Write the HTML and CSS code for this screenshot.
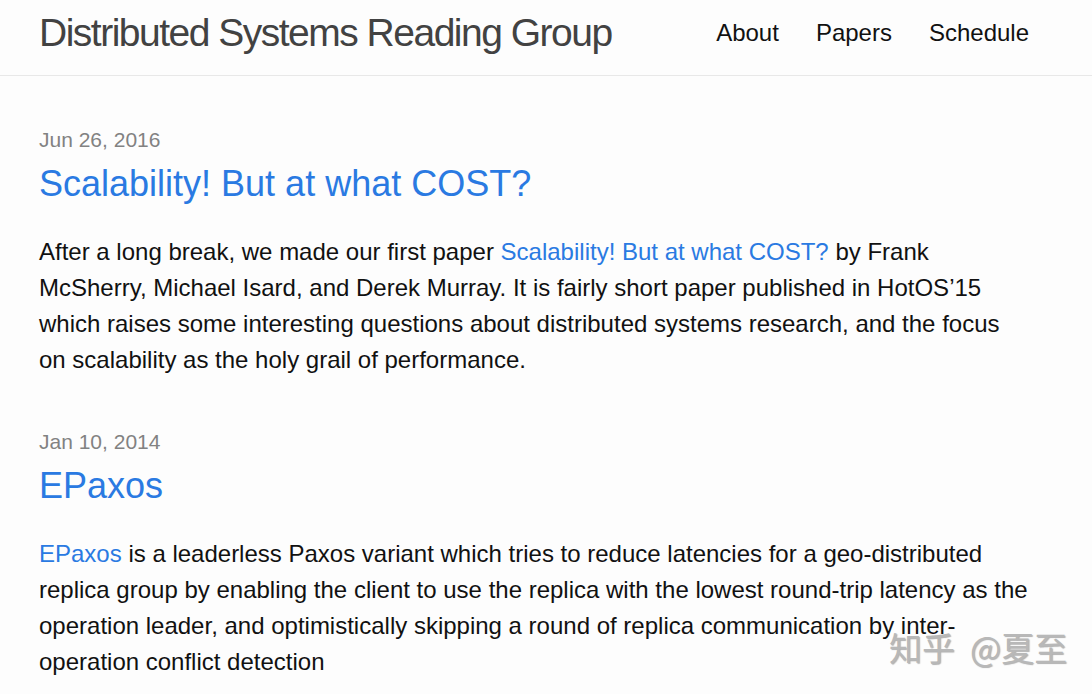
FILE: index.html
```html
<!DOCTYPE html>
<html lang="en">
<head>
<meta charset="utf-8">
<title>Distributed Systems Reading Group</title>
<link rel="stylesheet" href="styles.css">
</head>
<body>
<header class="site-header">
  <div class="wrapper header-inner">
    <a class="site-title" href="#">Distributed Systems Reading Group</a>
    <nav class="site-nav">
      <a class="page-link" href="#">About</a>
      <a class="page-link" href="#">Papers</a>
      <a class="page-link" href="#">Schedule</a>
    </nav>
  </div>
</header>
<main class="page-content">
  <div class="wrapper">
    <ul class="post-list">
      <li class="post">
        <span class="post-meta">Jun 26, 2016</span>
        <h2 class="post-title"><a class="post-link" href="#">Scalability! But at what COST?</a></h2>
        <p class="post-excerpt">After a long break, we made our first paper <a href="#">Scalability! But at what COST?</a> by Frank McSherry, Michael Isard, and Derek Murray. It is fairly short paper published in HotOS’15 which raises some interesting questions about distributed systems research, and the focus on scalability as the holy grail of performance.</p>
      </li>
      <li class="post">
        <span class="post-meta">Jan 10, 2014</span>
        <h2 class="post-title"><a class="post-link" href="#">EPaxos</a></h2>
        <p class="post-excerpt"><a href="#">EPaxos</a> is a leaderless Paxos variant which tries to reduce latencies for a geo-distributed replica group by enabling the client to use the replica with the lowest round-trip latency as the operation leader, and optimistically skipping a round of replica communication by inter-operation conflict detection</p>
      </li>
    </ul>
  </div>
</main>
<div class="watermark">知乎<span class="wm-gap"></span>@夏至</div>
</body>
</html>
```
FILE: styles.css
```css
* { box-sizing: border-box; }
html, body {
  margin: 0;
  padding: 0;
  background: #fdfdfd;
}
body {
  font-family: "Liberation Sans", Arial, sans-serif;
  color: #111111;
  font-size: 24px;
  line-height: 36px;
  overflow: hidden;
}
a { text-decoration: none; }
.wrapper {
  width: 1029px;
  padding-left: 39px;
}
.site-header {
  height: 76px;
  border-bottom: 1px solid #e8e8e8;
}
.header-inner {
  display: flex;
  justify-content: space-between;
  align-items: flex-start;
}
.site-title {
  font-size: 39px;
  line-height: 66px;
  letter-spacing: -1.5px;
  color: #424242;
}
.site-nav {
  display: flex;
  gap: 37px;
  padding-top: 15px;
}
.page-link {
  color: #111111;
  font-size: 24px;
  line-height: 36px;
}
.page-content {
  padding-top: 48px;
}
.post-list {
  list-style: none;
  margin: 0;
  padding: 0;
  display: flex;
  flex-direction: column;
  gap: 48px;
}
.post-meta {
  display: block;
  font-size: 21px;
  line-height: 31px;
  color: #828282;
}
.post-title {
  margin: 0;
  padding-top: 2px;
  font-weight: normal;
  font-size: 36px;
  line-height: 54px;
}
.post-link, .post-excerpt a {
  color: #2a7ae2;
}
.post-excerpt {
  margin: 23px 0 0;
}
.watermark {
  position: absolute;
  left: 889px;
  top: 626px;
  font-family: "Noto Sans CJK SC", sans-serif;
  font-size: 33px;
  line-height: 42px;
  color: #b8b8b8;
  text-shadow: 1px 1px 1px rgba(0, 0, 0, 0.3);
  white-space: nowrap;
  display: flex;
  align-items: center;
}
.wm-gap {
  display: inline-block;
  width: 15px;
}
```
